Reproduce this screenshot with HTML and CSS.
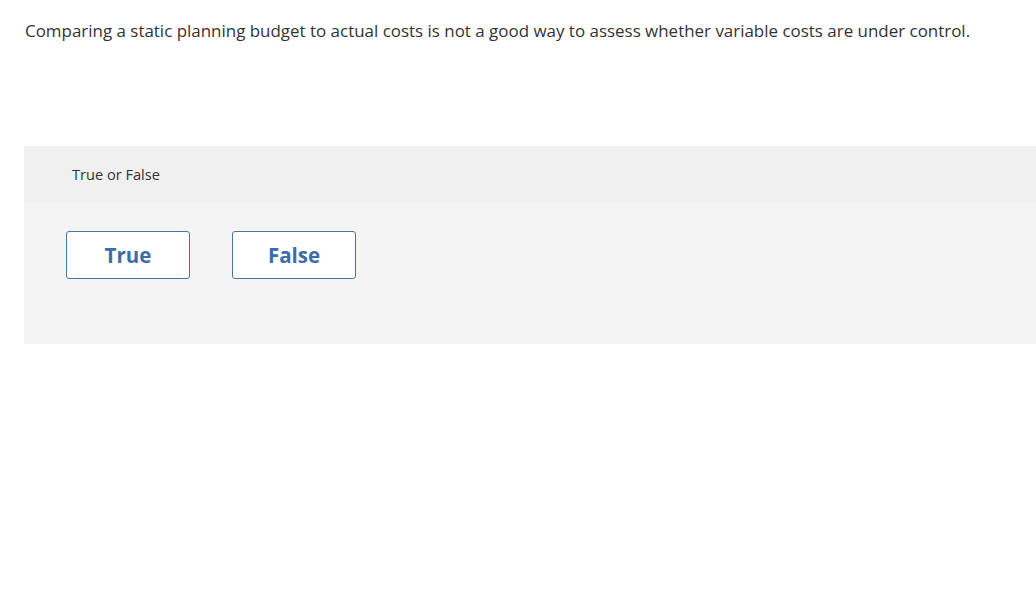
FILE: index.html
```html
<!DOCTYPE html>
<html>
<head>
<meta charset="utf-8">
<link rel="stylesheet" href="styles.css">
</head>
<body>
<div class="page">
  <p class="question">Comparing a static planning budget to actual costs is not a good way to assess whether variable costs are under control.</p>
  <div class="panel">
    <div class="panel-head">True or False</div>
    <div class="panel-body">
      <button class="choice">True</button>
      <button class="choice">False</button>
    </div>
  </div>
</div>
</body>
</html>
```
FILE: styles.css
```css
html, body {
  margin: 0;
  padding: 0;
  background: #ffffff;
  overflow: hidden;
}
.page {
  padding: 19px 0 0 24px;
  font-family: "Open Sans", "Liberation Sans", sans-serif;
  color: #333333;
}
.question {
  margin: 0 0 0 1px;
  font-size: 16.95px;
  line-height: 24px;
  color: #333333;
  white-space: nowrap;
}
.panel {
  margin-top: 103px;
  width: 1040px;
}
.panel-head {
  background: #f0f0f0;
  height: 56px;
  box-sizing: border-box;
  padding: 18px 0 0 48px;
  font-size: 14.6px;
  line-height: 20px;
  color: #333333;
}
.panel-body {
  background: #f4f4f4;
  height: 142px;
  box-sizing: border-box;
  padding: 29px 0 0 42px;
  display: flex;
  gap: 42px;
  align-items: flex-start;
}
.choice {
  width: 124px;
  height: 48px;
  background: #ffffff;
  border: 1px solid #4a74a0;
  border-radius: 3px;
  font-family: "Open Sans", "Liberation Sans", sans-serif;
  font-weight: 700;
  font-size: 20.5px;
  color: #3b6ea8;
  padding: 0;
}
```
